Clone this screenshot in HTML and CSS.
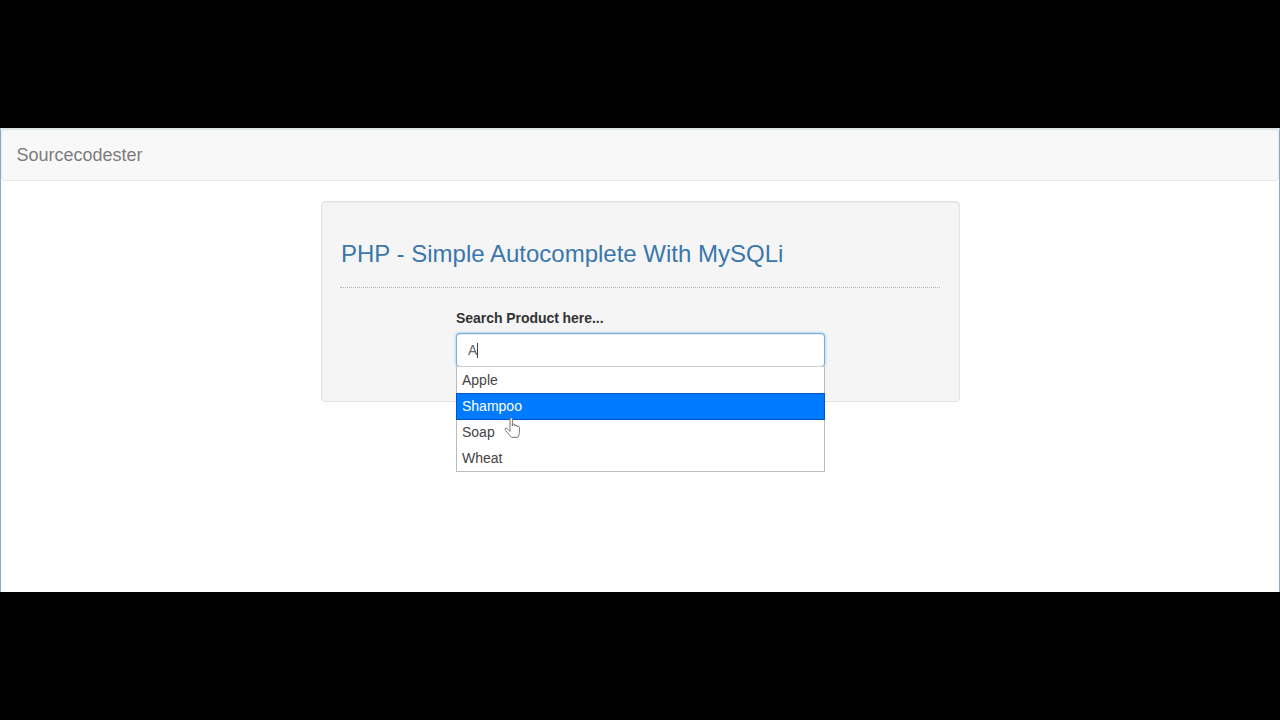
FILE: index.html
```html
<!DOCTYPE html>
<html lang="en">
<head>
<meta charset="utf-8">
<title>PHP - Simple Autocomplete With MySQLi</title>
<link rel="stylesheet" href="styles.css">
</head>
<body>
<main class="screen">
  <nav class="navbar"><a class="brand">Sourcecodester</a></nav>
  <section class="well">
    <h3 class="title">PHP - Simple Autocomplete With MySQLi</h3>
    <hr class="rule">
    <div class="field">
      <label class="label">Search Product here...</label>
      <div class="input"><span>A</span><span class="caret"></span></div>
      <ul class="menu">
        <li class="item">Apple</li>
        <li class="item active">Shampoo</li>
        <li class="item">Soap</li>
        <li class="item">Wheat</li>
      </ul>
      <svg class="pointer" width="18" height="22" viewBox="0 0 18 22"><path d="M6 2c0-1.600 2.400-1.600 2.400 0v7V8c0-1.300 2.400-1.300 2.400 0v1c0-1.200 2.300-1.200 2.300 0v1c0-1.200 2.300-1.100 2.300.3v5c0 2-.7 3.200-1.500 5H7.500C6 19 3.800 16 1.300 13.200c-.9-1.200.2-2.500 1.500-1.800.9.5 2.200 2 3.200 3z" fill="#fff" stroke="#666" stroke-width="0.900" stroke-linejoin="round"/></svg>
    </div>
  </section>
</main>
</body>
</html>
```

FILE: styles.css
```css
* { box-sizing: border-box; }
html, body { height: 100%; }
body {
  margin: 0;
  background: #000;
  padding: 128px 0;
  font-family: "Liberation Sans", Arial, sans-serif;
  color: #333;
}
.screen {
  height: 464px;
  background: #fff;
  border-left: 1px solid #7fb0c6;
  border-right: 1px solid #7fb0c6;
  border-top: 1px solid #d9e4e8;
  overflow: hidden;
}
.navbar {
  height: 52px;
  background: #f8f8f8;
  border: 1px solid #e7e7e7;
  border-top-color: #e2e2e2;
  border-radius: 4px;
  padding: 0 15px 0 14.500px;
  display: flex;
  align-items: center;
}
.brand { font-size: 18px; color: #7c7c7c; }
.well {
  width: 639px;
  height: 201px;
  margin: 20px 0 0 320px;
  padding: 19px;
  background: #f5f5f5;
  border: 1px solid #e3e3e3;
  border-radius: 4px;
  box-shadow: inset 0 1px 1px rgba(0,0,0,.05);
}
.title {
  margin: 20px 0 0;
  font-size: 24px;
  font-weight: 500;
  line-height: 26px;
  color: #3a77ab;
}
.rule {
  margin: 20px 0 0 -1px;
  border: 0;
  border-top: 1px dotted #b5b5b5;
}
.field {
  position: relative;
  width: 369px;
  margin: 20px auto 0;
}
.label {
  display: block;
  font-size: 14px;
  font-weight: bold;
  line-height: 20px;
  letter-spacing: -0.05px;
  color: #333;
  margin-bottom: 5px;
}
.input {
  height: 34px;
  background: #fff;
  border: 1px solid #76aedb;
  border-bottom-color: #8aa9c2;
  border-radius: 4px;
  box-shadow: inset 0 1px 1px rgba(0,0,0,.075), 0 0 3px rgba(102,175,233,.8);
  padding: 0 11px;
  display: flex;
  align-items: center;
  font-size: 14px;
  color: #666;
}
.caret {
  display: inline-block;
  width: 1px;
  height: 15px;
  background: #444;
}
.menu {
  position: absolute;
  top: 58px;
  left: 0;
  width: 369px;
  margin: 0;
  padding: 0;
  list-style: none;
  background: #fff;
  border: 1px solid #bcbcbc;
  border-top-color: #cfcfcf;
}
.item {
  height: 26px;
  line-height: 26px;
  padding: 0 5px;
  font-size: 14px;
  color: #444;
}
.active {
  height: 27px;
  margin: 0 -1px -1px;
  background: #007bff;
  color: #fff;
  border: 1px solid #0056c8;
  line-height: 25px;
}
.pointer {
  position: absolute;
  left: 48px;
  top: 109px;
}
```
